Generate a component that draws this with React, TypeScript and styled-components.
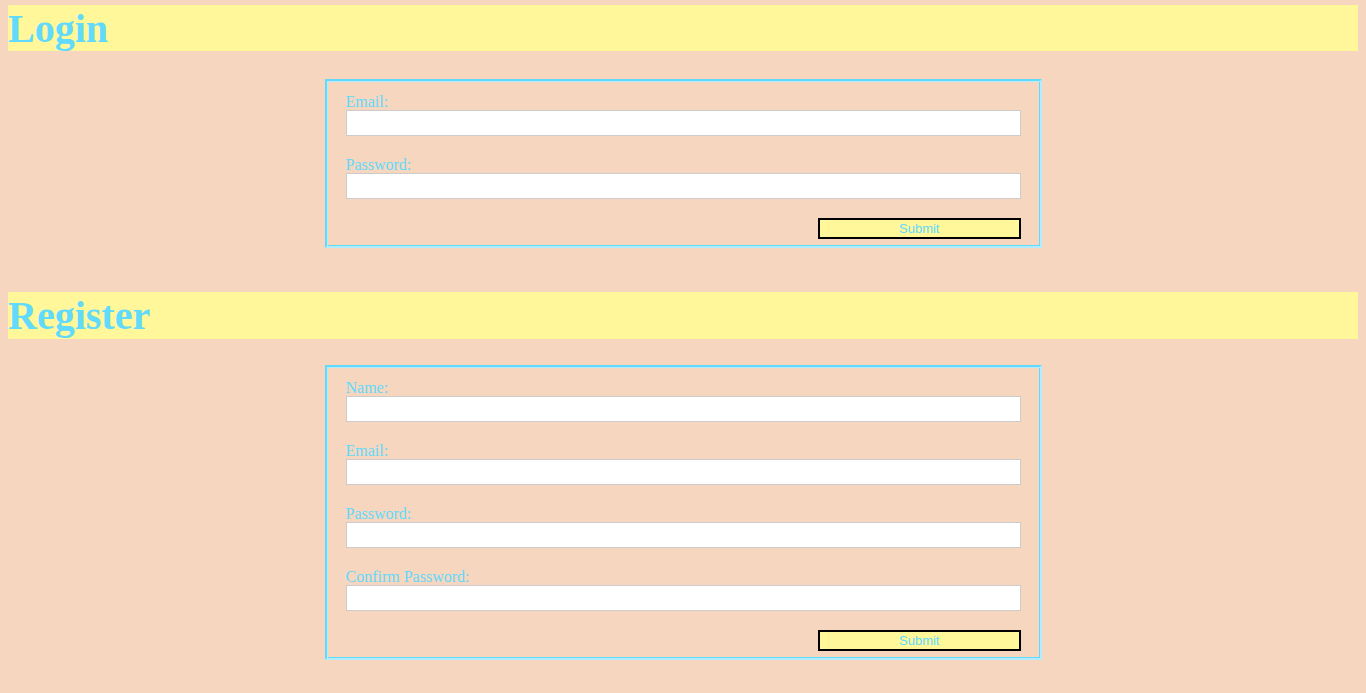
import React from 'react'
import styled, { createGlobalStyle } from 'styled-components'

const GlobalStyle = createGlobalStyle`
  html, body {
    background: #f7d6bf;
  }
  body {
    margin: 5px 8px 8px;
    font-family: "Liberation Serif", "Times New Roman", serif;
  }
`

const Title = styled.h1<{ $first?: boolean }>`
  margin: ${p => (p.$first ? '0' : '44px')} 0 ${p => (p.$first ? '28px' : '26px')};
  padding-top: 1px;
  height: ${p => (p.$first ? '46px' : '47px')};
  box-sizing: border-box;
  background: #fff799;
  color: #61dafb;
  font-size: 40px;
  line-height: 46px;
  font-weight: bold;
`

// groove-like two tone border: cyan outside top/left, inside bottom/right
const Fieldset = styled.fieldset`
  width: 50%;
  margin: 0 auto;
  padding: 11px 19px 7px;
  border: 2px solid;
  border-color: #61dafb #b3ecfc #b3ecfc #61dafb;
  box-sizing: content-box;
  box-shadow: inset 1px 1px 0 #b3ecfc, inset -1px -1px 0 #61dafb;
`

const Field = styled.div`
  display: flex;
  flex-direction: column;
  margin-bottom: 19px;
`

const Label = styled.label`
  color: #61dafb;
  font-size: 16px;
  line-height: 18px;
  padding-top: 1px;
  margin-bottom: -1px;
`

const Input = styled.input`
  box-sizing: border-box;
  width: 100%;
  height: 26px;
  margin: 0;
  border: 1px solid #ccc;
  background: #fff;
`

const Actions = styled.div`
  display: flex;
  justify-content: flex-end;
`

const Submit = styled.button`
  width: 30%;
  height: 21px;
  padding: 0;
  background: #fff799;
  border: 2px solid #000;
  color: #61dafb;
  font-family: "Liberation Sans", Arial, sans-serif;
  font-size: 13px;
  line-height: 15px;
`

type FormProps = { fields: string[] }

const Form = ({ fields }: FormProps) => (
  <form onSubmit={e => e.preventDefault()}>
    <Fieldset>
      {fields.map(f => (
        <Field key={f}>
          <Label>{f}:</Label>
          <Input type={f.toLowerCase().includes('password') ? 'password' : 'text'} />
        </Field>
      ))}
      <Actions>
        <Submit type="submit">Submit</Submit>
      </Actions>
    </Fieldset>
  </form>
)

const App = () => (
  <>
    <GlobalStyle />
    <Title $first>Login</Title>
    <Form fields={['Email', 'Password']} />
    <Title>Register</Title>
    <Form fields={['Name', 'Email', 'Password', 'Confirm Password']} />
  </>
)

export default App
